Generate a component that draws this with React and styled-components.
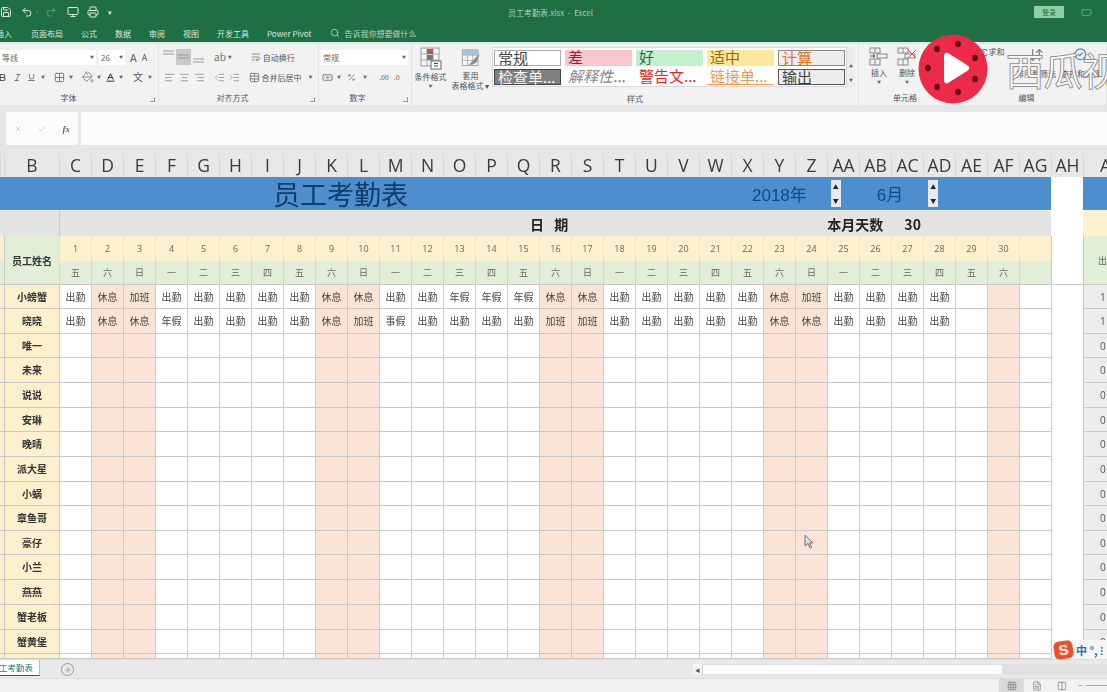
import React from 'react';
import styled, { createGlobalStyle } from 'styled-components';
import {
  Save, Undo2, Redo2, Search, Bold, Italic, Underline, Grid2x2, PaintBucket, Baseline,
  AlignLeft, AlignCenter, AlignRight, IndentDecrease, IndentIncrease, WrapText, TableCellsMerge, Percent, X, Check, Plus,
  Grid3x3, FileText, Columns2, Printer, Monitor, Banknote, Sigma, RectangleHorizontal, SearchCheck, ArrowDownUp,
} from 'lucide-react';

const Global = createGlobalStyle`
  html, body { margin: 0; padding: 0; background: #f1f1f1; }
  body { font-family: "Noto Sans CJK SC", "Noto Sans", sans-serif; overflow: hidden; }
  #root { width: 1107px; height: 692px; overflow: hidden; }
`;

const Page = styled.div`
  position: relative; width: 1107px; height: 692px; overflow: hidden;
  display: flex; flex-direction: column; filter: blur(0.45px);
`;
const Title = styled.header`
  height: 42px; background: #1f6f45; color: #cfe5d8; flex: none; display: flex; flex-direction: column;
`;
const QuickRow = styled.div`
  height: 24px; display: grid; grid-template-columns: 500px 534px 30px 43px; align-items: center;
`;
const QuickIcons = styled.div`display: flex; align-items: center; color: #dbe9e1;`;
const FileName = styled.div`font-size: 8px; color: #a9cdb9; padding-left: 8px; white-space: pre;`;
const Login = styled.div`
  width: 30px; height: 12px; background: #8ecfa5; color: #1f6f45; font-size: 7px; line-height: 12px; text-align: center;
`;
const WinBtn = styled.div`display: flex; padding-left: 17px; color: #6fa98a;`;
const TabRow = styled.nav`
  height: 18px; display: flex; align-items: center; font-size: 8px; color: #d8e8de; margin-left: -4px;
`;
const Tab = styled.span`margin-left: ${p => p.$gap}px; white-space: nowrap;`;
const SearchTab = styled(Tab)`display: flex; align-items: center; gap: 5px; color: #b5d3c2;`;
const Ribbon = styled.section`
  height: 63px; flex: none; background: #f2f2f2; border-top: 2px solid #dcebe1; box-sizing: border-box;
  display: flex; color: #444;
`;
const Group = styled.div`
  width: ${p => p.$w}px; flex: none; display: flex; flex-direction: column; position: relative;
  border-right: 1px solid #e4e4e4; box-sizing: border-box;
`;
const GroupBody = styled.div`flex: 1; display: flex; flex-direction: column; gap: 4px; padding-top: 5px;`;
const GroupLabel = styled.div`
  height: 15px; font-size: 8px; line-height: 15px; text-align: center; color: #555; position: relative; flex: none;
  padding-right: ${p => p.$pr || 0}px;
`;
const Expand = styled.span`
  position: absolute; right: 3px; bottom: 3px; width: 4px; height: 4px; border-right: 1px solid #999; border-bottom: 1px solid #999;
`;
const ToolRow = styled.div`display: flex; align-items: center; height: 16px; font-size: 8px; color: #555; white-space: nowrap;`;
const Slot = styled.span`display: inline-flex; align-items: center; flex: none; margin-left: ${p => p.$ml || 0}px; color: ${p => p.$c || 'inherit'};`;
const Field = styled.div`
  width: ${p => p.$w}px; height: 15px; background: #fff; font-size: 8px; padding: 0 2px; margin-left: ${p => p.$ml || 0}px;
  box-sizing: border-box; color: #666; display: flex; justify-content: space-between; align-items: center; flex: none;
`;
const Glyph = styled.span`font-size: ${p => p.$s || 8}px; line-height: 1; color: ${p => p.$c || '#555'}; font-weight: ${p => p.$b || 400}; margin-left: ${p => p.$ml || 0}px; flex: none;`;
const Caret = styled.span`font-size: 4px; line-height: 1; width: 4px; color: #666; flex: none; margin-left: ${p => p.$ml || 0}px;`;
const AlignBox = styled.span`
  width: 15px; height: 16px; display: flex; align-items: center; justify-content: center; flex: none; margin-left: ${p => p.$ml || 0}px;
  background: ${p => (p.$on ? '#c9c9c9' : 'transparent')}; color: #999;
`;
const BigTool = styled.div`
  width: ${p => p.$w}px; flex: none; display: flex; flex-direction: column; align-items: center; font-size: 8px; white-space: nowrap;
  line-height: 10px; padding-top: ${p => p.$pt || 3}px; color: #555; text-align: center; gap: 2px;
`;
const StyleGrid = styled.div`
  width: 355px; height: 40px; margin-top: 3px; background: #fff; border: 1px solid #d8d8d8; box-sizing: border-box; flex: none;
  display: grid; grid-template-columns: repeat(5, 67px); column-gap: 4px; grid-auto-rows: 16px; row-gap: 3px; padding: 2px 1px;
`;
const StyleCell = styled.div`
  font-size: 15px; line-height: 13px; padding-left: 3px; white-space: nowrap; box-sizing: border-box;
  background: ${p => p.$bg || 'transparent'}; color: ${p => p.$c || '#444'};
  border: ${p => (p.$line ? `1px solid ${p.$line}` : 'none')};
  border-bottom: ${p => (p.$under ? `1.5px solid ${p.$under}` : undefined)};
  font-style: ${p => (p.$i ? 'italic' : 'normal')};
`;
const ScrollStrip = styled.div`
  width: 8px; height: 40px; margin-top: 3px; background: #ededed; display: flex; flex-direction: column; flex: none;
  align-items: center; justify-content: flex-end; font-size: 4px; color: #666; gap: 8px; padding-bottom: 4px; box-sizing: border-box;
`;
const StyleWrap = styled.div`display: flex; flex: 1; padding-left: ${p => p.$pl || 0}px; gap: ${p => p.$gap || 0}px;`;
const EditCol = styled.div`
  width: ${p => p.$w}px; flex: none; margin-left: ${p => p.$ml || 0}px; padding-top: ${p => p.$pt || 0}px; font-size: 8px; line-height: 10px; color: #555;
  white-space: nowrap; display: flex; flex-direction: column; align-items: center; gap: 6px;
`;

const Gap = styled.div`height: ${p => p.$h}px; flex: none; background: #e6e6e6;`;
const FormulaBar = styled.div`height: 33px; flex: none; background: #e6e6e6; display: flex; gap: 3px; padding-left: 6px;`;
const FormulaBtns = styled.div`
  width: 72px; background: #fbfbfb; display: flex; align-items: center; justify-content: space-around; color: #bbb;
`;
const Fx = styled.span`font-size: 9px; color: #666; font-weight: 700; font-style: italic; font-family: "Liberation Serif", serif;`;
const FormulaInput = styled.div`flex: 1; background: #fcfcfc;`;

const COLS = ['C','D','E','F','G','H','I','J','K','L','M','N','O','P','Q','R','S','T','U','V','W','X','Y','Z','AA','AB','AC','AD','AE','AF','AG','AH'];
const PINK = new Set([1,2,8,9,15,16,22,23,29]);
const WEEK = ['五','六','日','一','二','三','四'];
const GRID = '4px 55px repeat(32, 32px) 24px';

const Sheet = styled.main`flex: 1; min-height: 0; display: flex; flex-direction: column; background: #fff; overflow: hidden;`;
const Row = styled.div`display: grid; grid-template-columns: ${GRID}; height: ${p => p.$h}px; flex: none;`;
const Head = styled.div`
  background: #e8e8e8; font-size: 17.5px; line-height: 24px; text-align: center; color: #3a3a3a;
  font-family: "Open Sans", sans-serif; border-left: 1px solid #dadada; box-sizing: border-box; overflow: hidden;
`;
const LastHead = styled(Head)`text-align: left; padding-left: 16px;`;
const BlueBand = styled.div`grid-column: ${p => p.$col}; background: #4d8fce; display: flex; align-items: center;`;
const SheetTitle = styled.div`margin-left: 273px; font-size: 27px; line-height: 33px; color: #0f3c68; white-space: nowrap; flex: none;`;
const BandText = styled.span`
  font-size: 17px; color: #0f4a80; white-space: nowrap; font-family: "Liberation Sans", "Noto Sans CJK SC", sans-serif;
  margin-left: ${p => p.$ml}px; flex: none;
`;
const Spin = styled.div`
  width: 10px; height: 27px; background: #e9e9e9; display: flex; flex-direction: column; align-items: center; justify-content: space-between;
  font-size: 6px; line-height: 13px; color: #222; margin-left: ${p => p.$ml}px; flex: none;
`;
const White = styled.div`grid-column: ${p => p.$col}; background: #fff;`;
const GrayBand = styled.div`
  grid-column: ${p => p.$col}; background: #e3e3e3; font-weight: 700; font-size: 14px; color: #222; display: flex; align-items: center;
  border-left: ${p => (p.$mark ? '1px solid #ccc' : 'none')}; box-sizing: border-box; border-top: 1px solid #f0f0f0;
`;
const DateLabel = styled.span`margin-left: ${p => p.$ml}px; white-space: nowrap; flex: none; word-spacing: ${p => p.$ws || 0}px;`;
const YellowBand = styled.div`grid-column: ${p => p.$col}; background: #fdf0cc;`;

const TwoRows = styled.div`display: grid; grid-template-columns: ${GRID}; grid-template-rows: 25px 24px; flex: none;`;
const NameHead = styled.div`
  grid-column: 2; grid-row: 1 / span 2; background: #e1efd9; font-size: 10px; font-weight: 700; color: #333;
  display: flex; align-items: center; justify-content: center; border-left: 1px solid #c8c8c8; box-sizing: border-box;
  border-bottom: 1px solid #c8c8c8;
`;
const EdgeTop = styled.div`background: #fdf0cc; grid-column: 1; grid-row: 1;`;
const EdgeBot = styled.div`background: #e1efd9; grid-column: 1; grid-row: 2; border-bottom: 1px solid #c8c8c8;`;
const DayCell = styled.div`
  grid-row: 1; background: #fdf0cc; font-size: 9px; display: flex; align-items: center; justify-content: center; color: #666;
  border-left: 1px solid #ece3c8; box-sizing: border-box; font-family: "Open Sans", sans-serif;
`;
const WeekCell = styled.div`
  grid-row: 2; background: #e1efd9; font-size: 9px; display: flex; align-items: center; justify-content: center; color: #666;
  border-left: 1px solid #d3dfcb; border-bottom: 1px solid #c8c8c8; box-sizing: border-box;
`;
const SideHead = styled.div`
  grid-column: 35; grid-row: 1 / span 2; background: #e1efd9; font-size: 9px; color: #666; display: flex; align-items: center;
  padding-left: 14px; box-sizing: border-box; border-left: 1px solid #c8c8c8; border-bottom: 1px solid #c8c8c8; white-space: nowrap;
`;
const EmptyHead = styled.div`grid-column: 34; grid-row: 1 / span 2; background: #fff; border-bottom: 1px solid #c8c8c8; border-left: 1px solid #c8c8c8; box-sizing: border-box;`;
const Edge = styled.div`background: #fdf0cc; border-bottom: 1px solid #c9c9c9; box-sizing: border-box;`;
const NameCell = styled.div`
  background: #fdf0cc; font-size: 10px; font-weight: 700; color: #333; text-align: center; line-height: 24px; white-space: nowrap;
  border-left: 1px solid #c8c8c8; border-bottom: 1px solid #c9c9c9; box-sizing: border-box; overflow: hidden;
`;
const Cell = styled.div`
  background: ${p => (p.$pink ? '#fbe3d6' : '#fff')}; font-size: 10px; color: #444; text-align: center; line-height: 24px;
  border-left: 1px solid #cfcac8; border-bottom: 1px solid #c9c9c9; box-sizing: border-box; white-space: nowrap; overflow: hidden;
`;
const AfterGrid = styled.div`background: #fff; border-left: 1px solid #cfcac8; box-sizing: border-box;`;
const SideCell = styled.div`
  background: #ececec; font-size: 10px; line-height: 24px; color: #555; padding-left: 16px; box-sizing: border-box;
  border-left: 1px solid #c8c8c8; border-bottom: 1px solid #c9c9c9; font-family: "Open Sans", sans-serif; overflow: hidden;
`;

const SheetTabs = styled.div`
  height: 19px; flex: none; background: #e9e9e9; display: flex; align-items: stretch; border-top: 1px solid #ddd; box-sizing: border-box;
`;
const SheetTab = styled.div`
  width: 40px; height: 16px; background: #fff; font-size: 8.5px; line-height: 15px; color: #257a50; border-bottom: 1px solid #1f6f45;
  overflow: hidden; white-space: nowrap; display: flex; justify-content: flex-end; padding-right: 6px; box-sizing: border-box; border-right: 1px solid #bbb;
`;
const AddSheet = styled.div`
  width: 11px; height: 11px; border: 1px solid #999; border-radius: 50%; margin: 3px 0 0 21px; display: flex; align-items: center;
  justify-content: center; color: #888;
`;
const Splitter = styled.div`flex: 1; display: flex; justify-content: flex-end; align-items: center;`;
const ScrollTrack = styled.div`width: 414px; height: 11px; background: #e0e0e0; display: flex; align-items: center; box-sizing: border-box;`;
const ScrollArrow = styled.div`width: 10px; height: 11px; background: #f5f5f5; font-size: 5px; line-height: 11px; color: #555; text-align: center; border-right: 1px solid #ccc; box-sizing: border-box;`;
const ScrollThumb = styled.div`width: 299px; height: 9px; background: #fcfcfc;`;
const Status = styled.footer`
  height: 14px; flex: none; background: #f1f1f1; display: flex; justify-content: flex-end; align-items: stretch; color: #888;
  border-top: 1px solid #ddd; box-sizing: border-box;
`;
const ViewBtn = styled.div`
  width: 25px; display: flex; align-items: center; justify-content: center; background: ${p => (p.$on ? '#d9d9d9' : 'transparent')};
`;
const Zoom = styled.div`width: 29px; display: flex; align-items: center; gap: 3px; margin-left: 4px; font-size: 9px;`;
const ZoomLine = styled.span`flex: 1; height: 1px; background: #aaa;`;

const Mark = styled.svg`position: absolute; left: 917px; top: 34px;`;
const Brand = styled.div`
  position: absolute; left: 1006px; top: 48px; font-size: 38px; line-height: 42px; color: #fff; white-space: nowrap;
  -webkit-text-stroke: 2px #8f8f8f; paint-order: stroke fill; font-weight: 300;
`;
const Cursor = styled.svg`position: absolute; left: 804px; top: 534px;`;
const Ime = styled.div`
  position: absolute; left: 1054px; top: 640px; width: 53px; height: 19px; display: flex; align-items: center; gap: 3px;
  background: #f6f6f6; font-size: 11px; font-weight: 700; color: #2a6fb0; white-space: nowrap;
`;
const ImeLogo = styled.div`
  width: 19px; height: 18px; border-radius: 5px; background: #e8512d; color: #fff; font-weight: 700; font-size: 15px; line-height: 18px; flex: none;
  text-align: center; font-family: "Liberation Sans", sans-serif; transform: rotate(-8deg);
`;

const NAMES = ['小螃蟹','晓晓','唯一','未来','说说','安琳','晚晴','派大星','小蜗','章鱼哥','豪仔','小兰','燕燕','蟹老板','蟹黄堡',''];
const rep = (s, n) => Array(n).fill(s);
const ROW1 = ['出勤','休息','加班',...rep('出勤',5),'休息','休息','出勤','出勤','年假','年假','年假','休息','休息',...rep('出勤',5),'休息','加班',...rep('出勤',4)];
const ROW2 = ['出勤','休息','休息','年假',...rep('出勤',4),'休息','加班','事假',...rep('出勤',4),'加班','加班',...rep('出勤',5),'休息','休息',...rep('出勤',4)];
const ROWH = [24,25,24,25,25,24,25,25,24,25,24,25,25,25,24,5];
const SEEDS = [[41,10],[20,15],[58,24],[11,34],[58,45],[20,53],[41,58]];

const VAlign = ({ y }) => (
  <svg width="11" height="14" viewBox="0 0 11 14">
    <path d={`M0 ${y}h11M0 ${y + 3}h11`} stroke="currentColor" />
  </svg>
);

const TableIcon = ({ variant }) => (
  <svg width="22" height={variant === 'cond' ? 23 : 20} viewBox="0 0 22 23">
    <rect x="1" y="1" width="18" height="18" fill="#f6f6f6" stroke="#9a9a9a" />
    <path d="M1 7h18M1 13h18M7 1v18M13 1v18" stroke="#aaa" />
    {variant === 'cond' ? (
      <>
        <rect x="7" y="2" width="6" height="5" fill="#c0504d" />
        <rect x="7" y="8" width="6" height="5" fill="#777" />
        <rect x="11" y="14" width="10" height="8" fill="#fff" stroke="#666" />
        <path d="M14 16.5h4M14 19h4" stroke="#444" />
      </>
    ) : (
      <>
        <rect x="1" y="1" width="18" height="6" fill="#aac0d8" />
        <path d="M8 19l13-14-4 11z" fill="#8a8a8a" />
      </>
    )}
  </svg>
);

const CellToolIcon = ({ del }) => (
  <svg width="20" height="19" viewBox="0 0 20 19">
    <rect x="1" y="1" width="10" height="5" fill="none" stroke="#888" />
    <rect x="1" y="12" width="10" height="6" fill="none" stroke="#888" />
    <path d="M6 1v5M6 12v6" stroke="#888" />
    <rect x="8" y="7" width="10" height="4" fill="none" stroke="#888" />
    {del ? <path d="M11 3l8 8M19 3l-8 8" stroke="#d9534f" /> : <path d="M1 9h5M4 7l2 2-2 2" stroke="#1f6f45" fill="none" />}
  </svg>
);

export default function App() {
  return (
    <Page>
      <Global />
      <Title>
        <QuickRow>
          <QuickIcons>
            <Save size={12} />
            <Slot $ml={9}><Undo2 size={12} /></Slot>
            <Caret $ml={2}>▼</Caret>
            <Slot $ml={6} $c="#5f9c7d"><Redo2 size={12} /></Slot>
            <Slot $ml={10}><Monitor size={12} /></Slot>
            <Slot $ml={8}><Printer size={12} /></Slot>
            <Glyph $s={7} $c="#dbe9e1" $ml={9}>▾</Glyph>
          </QuickIcons>
          <FileName>员工考勤表.xlsx  -  Excel</FileName>
          <Login>登录</Login>
          <WinBtn><RectangleHorizontal size={11} /></WinBtn>
        </QuickRow>
        <TabRow>
          <Tab $gap={0}>插入</Tab>
          <Tab $gap={19}>页面布局</Tab>
          <Tab $gap={18}>公式</Tab>
          <Tab $gap={18}>数据</Tab>
          <Tab $gap={18}>审阅</Tab>
          <Tab $gap={18}>视图</Tab>
          <Tab $gap={18}>开发工具</Tab>
          <Tab $gap={18}>Power Pivot</Tab>
          <SearchTab $gap={18}><Search size={10} />告诉我你想要做什么</SearchTab>
        </TabRow>
      </Title>

      <Ribbon>
        <Group $w={159}>
          <GroupBody>
            <ToolRow>
              <Field $w={96}><span>等线</span><Caret>▼</Caret></Field>
              <Field $w={26} $ml={3}><span>26</span><Caret>▼</Caret></Field>
              <Glyph $s={11} $ml={5}>A</Glyph>
              <Glyph $s={9} $ml={5}>A</Glyph>
            </ToolRow>
            <ToolRow>
              <Slot $ml={-2}><Bold size={9} strokeWidth={3} /></Slot>
              <Slot $ml={6}><Italic size={9} /></Slot>
              <Slot $ml={5}><Underline size={9} /></Slot>
              <Caret $ml={5}>▼</Caret>
              <Slot $ml={9} $c="#777"><Grid2x2 size={11} /></Slot>
              <Caret $ml={4}>▼</Caret>
              <Slot $ml={9} $c="#888"><PaintBucket size={12} /></Slot>
              <Caret $ml={3}>▼</Caret>
              <Slot $ml={4} $c="#222"><Baseline size={11} /></Slot>
              <Caret $ml={3}>▼</Caret>
              <Glyph $s={10} $ml={10}>文</Glyph>
              <Caret $ml={5}>▼</Caret>
            </ToolRow>
          </GroupBody>
          <GroupLabel $pr={21}>字体<Expand /></GroupLabel>
        </Group>
        <Group $w={160}>
          <GroupBody>
            <ToolRow>
              <AlignBox $ml={1.5}><VAlign y={1} /></AlignBox>
              <AlignBox $on $ml={0.5}><VAlign y={5} /></AlignBox>
              <AlignBox><VAlign y={9} /></AlignBox>
              <Glyph $s={10} $ml={8} $c="#777">ab</Glyph>
              <Caret $ml={2}>▼</Caret>
              <Slot $ml={19} $c="#777"><WrapText size={10} /></Slot>
              <Slot $ml={2}>自动换行</Slot>
            </ToolRow>
            <ToolRow>
              <AlignBox $ml={2.5}><AlignLeft size={11} /></AlignBox>
              <AlignBox><AlignCenter size={11} /></AlignBox>
              <AlignBox><AlignRight size={11} /></AlignBox>
              <AlignBox $ml={5}><IndentDecrease size={11} /></AlignBox>
              <AlignBox><IndentIncrease size={11} /></AlignBox>
              <Slot $ml={7} $c="#777"><TableCellsMerge size={11} /></Slot>
              <Slot $ml={2}>合并后居中</Slot>
              <Caret $ml={7}>▼</Caret>
            </ToolRow>
          </GroupBody>
          <GroupLabel $pr={12}>对齐方式<Expand /></GroupLabel>
        </Group>
        <Group $w={93}>
          <GroupBody>
            <ToolRow>
              <Field $w={87} $ml={2}><span>常规</span><Caret>▼</Caret></Field>
            </ToolRow>
            <ToolRow>
              <Slot $ml={3} $c="#777"><Banknote size={11} /></Slot>
              <Caret $ml={4}>▼</Caret>
              <Slot $ml={5.5} $c="#777"><Percent size={9} /></Slot>
              <Caret $ml={7.5}>▼</Caret>
              <Glyph $s={7} $ml={12}>.00</Glyph>
              <Glyph $s={7} $ml={5}>.0</Glyph>
            </ToolRow>
          </GroupBody>
          <GroupLabel $pr={15}>数字<Expand /></GroupLabel>
        </Group>
        <Group $w={447}>
          <StyleWrap>
            <BigTool $w={37}><TableIcon variant="cond" />条件格式<Caret>▼</Caret></BigTool>
            <BigTool $w={43} $pt={5}><TableIcon />套用<br />表格格式 ▾</BigTool>
            <StyleGrid>
              <StyleCell $line="#aaa">常规</StyleCell>
              <StyleCell $bg="#fcc6ce" $c="#a3182b">差</StyleCell>
              <StyleCell $bg="#c6efce" $c="#1f6f3a">好</StyleCell>
              <StyleCell $bg="#fde89c" $c="#9c6500">适中</StyleCell>
              <StyleCell $bg="#ededed" $c="#e3761b" $line="#8a8a8a">计算</StyleCell>
              <StyleCell $bg="#7f7f7f" $c="#f5f5f5" $line="#444">检查单...</StyleCell>
              <StyleCell $c="#888" $i>解释性...</StyleCell>
              <StyleCell $c="#e0252b">警告文...</StyleCell>
              <StyleCell $c="#e89a55" $under="#e89a55">链接单...</StyleCell>
              <StyleCell $bg="#ededed" $c="#3f3f3f" $line="#555">输出</StyleCell>
            </StyleGrid>
            <ScrollStrip><span>▲</span><span>▼</span></ScrollStrip>
          </StyleWrap>
          <GroupLabel>样式</GroupLabel>
        </Group>
        <Group $w={108}>
          <StyleWrap $pl={10} $gap={8}>
            <BigTool $w={20}><CellToolIcon />插入<Caret>▼</Caret></BigTool>
            <BigTool $w={20}><CellToolIcon del />删除<Caret>▼</Caret></BigTool>
          </StyleWrap>
          <GroupLabel $pr={15}>单元格</GroupLabel>
        </Group>
        <Group $w={140}>
          <StyleWrap>
            <EditCol $w={40} $ml={5} $pt={3}><Slot><Sigma size={9} />求和</Slot></EditCol>
            <EditCol $w={40} $ml={4} $pt={3}><ArrowDownUp size={16} color="#888" />排序和筛选</EditCol>
            <EditCol $w={40} $ml={5} $pt={3}><SearchCheck size={16} color="#5a8fc0" />查找和选择</EditCol>
          </StyleWrap>
          <GroupLabel $pr={20}>编辑</GroupLabel>
        </Group>
      </Ribbon>

      <Gap $h={7} />
      <FormulaBar>
        <FormulaBtns>
          <X size={8} />
          <Check size={8} />
          <Fx>fx</Fx>
        </FormulaBtns>
        <FormulaInput />
      </FormulaBar>
      <Gap $h={8} />

      <Sheet>
        <Row $h={24}>
          <Head />
          <Head>B</Head>
          {COLS.map(c => <Head key={c}>{c}</Head>)}
          <LastHead>A</LastHead>
        </Row>
        <Row $h={33}>
          <BlueBand $col="1 / span 33">
            <SheetTitle>员工考勤表</SheetTitle>
            <BandText $ml={344}>2018年</BandText>
            <Spin $ml={24}><span>▲</span><span>▼</span></Spin>
            <BandText $ml={36}>6月</BandText>
            <Spin $ml={25}><span>▲</span><span>▼</span></Spin>
          </BlueBand>
          <White $col="34" />
          <BlueBand $col="35" />
        </Row>
        <Row $h={26}>
          <GrayBand $col="1 / span 2" />
          <GrayBand $col="3 / span 31" $mark>
            <DateLabel $ml={470} $ws={7}>日 期</DateLabel>
            <DateLabel $ml={259} $ws={18}>本月天数 30</DateLabel>
          </GrayBand>
          <White $col="34" />
          <YellowBand $col="35" />
        </Row>
        <TwoRows>
          <EdgeTop />
          <EdgeBot />
          <NameHead>员工姓名</NameHead>
          {COLS.slice(0, 31).map((c, i) => (
            <DayCell key={c} style={{ gridColumn: i + 3 }}>{i < 30 ? i + 1 : ''}</DayCell>
          ))}
          {COLS.slice(0, 31).map((c, i) => (
            <WeekCell key={c} style={{ gridColumn: i + 3 }}>{i < 30 ? WEEK[i % 7] : ''}</WeekCell>
          ))}
          <EmptyHead />
          <SideHead>出</SideHead>
        </TwoRows>
        {NAMES.map((n, r) => (
          <Row key={r} $h={ROWH[r]}>
            <Edge />
            <NameCell>{n}</NameCell>
            {COLS.slice(0, 31).map((c, i) => (
              <Cell key={c} $pink={PINK.has(i)}>{r === 0 ? ROW1[i] : r === 1 ? ROW2[i] : ''}</Cell>
            ))}
            <AfterGrid />
            <SideCell>{r < 2 ? '1' : r < 15 ? '0' : ''}</SideCell>
          </Row>
        ))}
      </Sheet>

      <SheetTabs>
        <SheetTab>工考勤表</SheetTab>
        <AddSheet><Plus size={8} /></AddSheet>
        <Splitter>
          <ScrollTrack>
            <ScrollArrow>◀</ScrollArrow>
            <ScrollThumb />
          </ScrollTrack>
        </Splitter>
      </SheetTabs>
      <Status>
        <ViewBtn $on><Grid3x3 size={10} /></ViewBtn>
        <ViewBtn><FileText size={10} /></ViewBtn>
        <ViewBtn><Columns2 size={10} /></ViewBtn>
        <Zoom>−<ZoomLine /></Zoom>
      </Status>

      <Mark width="72" height="72" viewBox="0 0 72 72">
        <circle cx="36" cy="35" r="34.5" fill="#ee2a49" />
        {SEEDS.map(([x, y]) => (
          <ellipse key={`${x}-${y}`} cx={x} cy={y} rx="2.8" ry="3.2" fill="#5d0c12" />
        ))}
        <path d="M27 22c0-3 2-4 4-3l19 12c3 2 3 4 0 6L31 49c-2 1-4 0-4-3z" fill="#fff" />
      </Mark>
      <Brand>西瓜视</Brand>
      <Cursor width="10" height="15" viewBox="0 0 10 15">
        <path d="M1 1v11l3-2.5 2 4.5 1.6-.8-2-4.3H9z" fill="#ddd" stroke="#666" strokeWidth="0.9" />
      </Cursor>
      <Ime>
        <ImeLogo>S</ImeLogo>
        <span>中 °, ⁝</span>
      </Ime>
    </Page>
  );
}
